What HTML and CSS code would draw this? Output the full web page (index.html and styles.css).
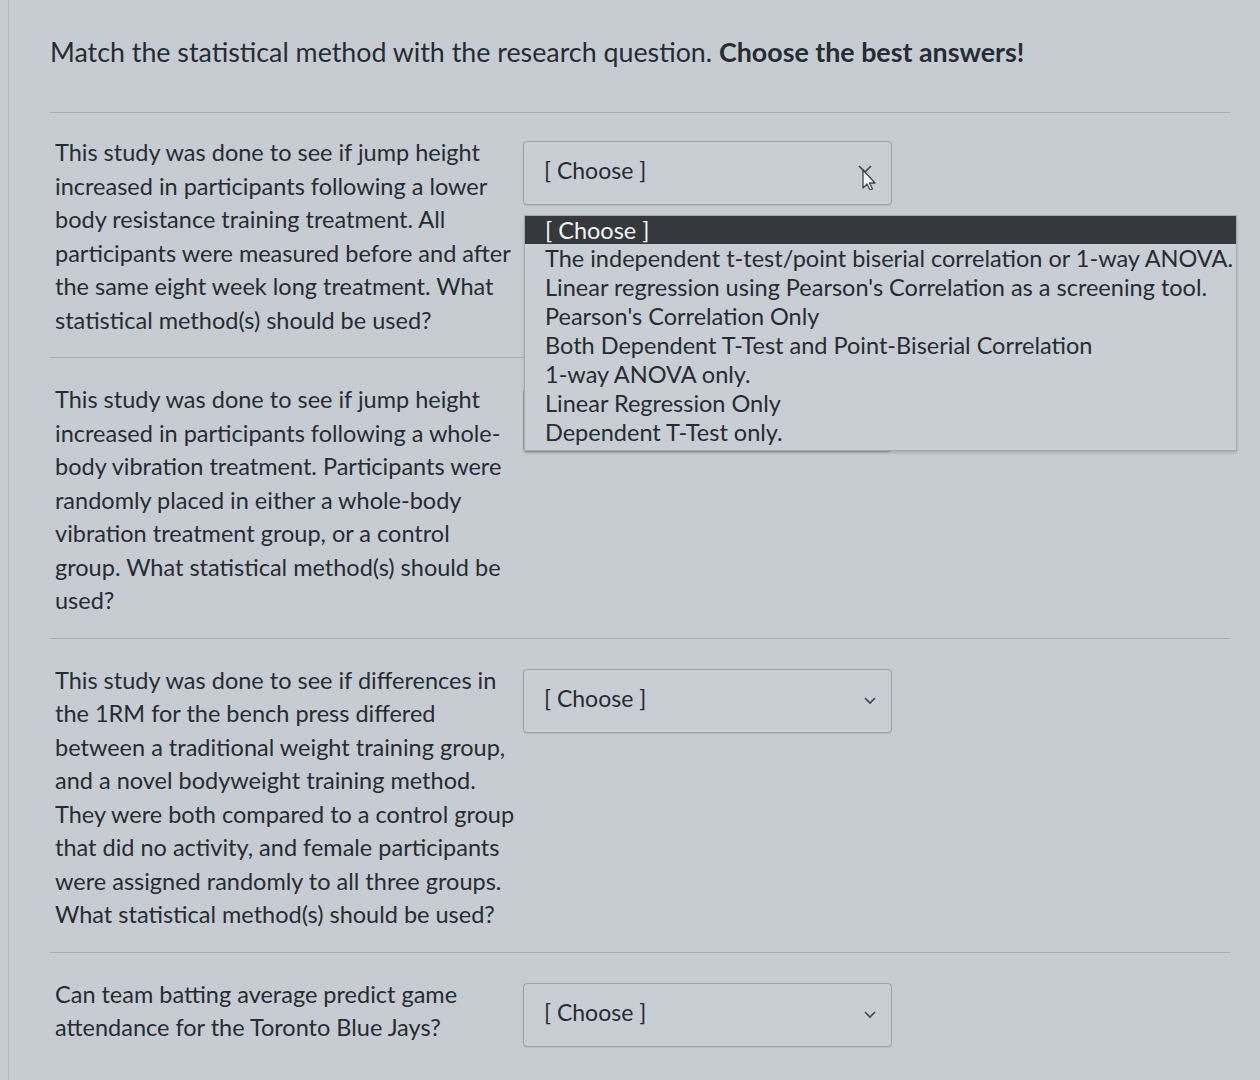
FILE: index.html
```html
<!DOCTYPE html>
<html lang="en">
<head>
    <meta charset="UTF-8">
    <title>Matching Question</title>
    <link rel="stylesheet" href="styles.css">
</head>
<body>
    <div class="page">
        <div class="question-text">
            Match the statistical method with the research question. <strong>Choose the best answers!</strong>
        </div>

        <div class="answers">
            <div class="answer-row">
                <div class="prompt">This study was done to see if jump height increased in participants following a lower body resistance training treatment. All participants were measured before and after the same eight week long treatment. What statistical method(s) should be used?</div>
                <div class="select-wrap">
                    <div class="select open">
                        <span>[ Choose ]</span>
                        <svg class="cursor" width="22" height="30" viewBox="0 0 22 30">
                            <path d="M2 6 L8 12 L14 6" fill="none" stroke="#3a4550" stroke-width="1.6"/>
                            <path d="M6 10 L6 28 L10 24 L13 30 L15.5 29 L12.5 23 L18 23 Z" fill="#fff" stroke="#3a4550" stroke-width="1.3" stroke-linejoin="round"/>
                        </svg>
                    </div>
                    <ul class="options">
                        <li class="selected">[ Choose ]</li>
                        <li>The independent t-test/point biserial correlation or 1-way ANOVA.</li>
                        <li>Linear regression using Pearson's Correlation as a screening tool.</li>
                        <li>Pearson's Correlation Only</li>
                        <li>Both Dependent T-Test and Point-Biserial Correlation</li>
                        <li>1-way ANOVA only.</li>
                        <li>Linear Regression Only</li>
                        <li>Dependent T-Test only.</li>
                    </ul>
                </div>
            </div>

            <div class="answer-row">
                <div class="prompt">This study was done to see if jump height increased in participants following a whole-body vibration treatment. Participants were randomly placed in either a whole-body vibration treatment group, or a control group. What statistical method(s) should be used?</div>
                <div class="select-wrap">
                    <!-- sits under the open list above -->
                    <div class="select covered">
                        <span>[ Choose ]</span>
                        <svg class="chevron" width="14" height="10" viewBox="0 0 14 10"><path d="M2 2 L7 7 L12 2" fill="none" stroke="#3a4550" stroke-width="1.6"/></svg>
                    </div>
                </div>
            </div>

            <div class="answer-row">
                <div class="prompt">This study was done to see if differences in the 1RM for the bench press differed between a traditional weight training group, and a novel bodyweight training method. They were both compared to a control group that did no activity, and female participants were assigned randomly to all three groups. What statistical method(s) should be used?</div>
                <div class="select-wrap">
                    <div class="select">
                        <span>[ Choose ]</span>
                        <svg class="chevron" width="14" height="10" viewBox="0 0 14 10"><path d="M2 2 L7 7 L12 2" fill="none" stroke="#3a4550" stroke-width="1.6"/></svg>
                    </div>
                </div>
            </div>

            <div class="answer-row last">
                <div class="prompt">Can team batting average predict game attendance for the Toronto Blue Jays?</div>
                <div class="select-wrap">
                    <div class="select">
                        <span>[ Choose ]</span>
                        <svg class="chevron" width="14" height="10" viewBox="0 0 14 10"><path d="M2 2 L7 7 L12 2" fill="none" stroke="#3a4550" stroke-width="1.6"/></svg>
                    </div>
                </div>
            </div>
        </div>
    </div>
</body>
</html>
```

FILE: styles.css
```css
html, body {
    margin: 0;
    height: 100%;
    background-color: #c7ccd2;
    font-family: Lato, "Open Sans", sans-serif;
    color: #262c33;
}
.page {
    margin-left: 8px;
    min-height: 100%;
    border-left: 1px solid #b3b8be;
    padding: 34px 30px 0 41px;
    box-sizing: border-box;
}
.question-text {
    font-size: 26.8px;
    line-height: 36px;
    padding-bottom: 42px;
    border-bottom: 1px solid #a9aeb4;
}
.question-text strong {
    font-weight: 700;
}
.answer-row {
    display: grid;
    grid-template-columns: 462px 369px;
    column-gap: 6px;
    padding: 20px 0 20px 5px;
    border-bottom: 1px solid #a9aeb4;
}
.answer-row + .answer-row {
    padding-top: 22px;
}
.answer-row.last {
    border-bottom: none;
}
.prompt {
    font-size: 23.5px;
    line-height: 33.5px;
    padding-top: 3px;
}
.select-wrap {
    position: relative;
    padding-top: 8px;
}
.select {
    height: 62px;
    border: 1px solid #9ba1a8;
    border-radius: 4px;
    background-color: #c9ced4;
    display: flex;
    align-items: center;
    justify-content: space-between;
    padding: 0 14px 0 20px;
    font-size: 23px;
    box-shadow: 0 1px 1px rgba(0, 0, 0, 0.08);
}
.select span {
    margin-top: -6px;
}
.select.covered span {
    visibility: hidden;
}
.cursor {
    margin-top: 4px;
    margin-right: -2px;
}
.options {
    position: absolute;
    top: 82px;
    left: 1px;
    width: 711px;
    margin: 0;
    padding: 0 0 3px 0;
    list-style: none;
    background-color: #c9ced4;
    border: 1px solid #a3a9b0;
    box-shadow: 0 2px 3px rgba(0, 0, 0, 0.15);
    z-index: 2;
}
.options li {
    font-size: 23.5px;
    line-height: 29px;
    padding-left: 20px;
    white-space: nowrap;
}
.options li.selected {
    background-color: #35383c;
    color: #f2f3f4;
    line-height: 28px;
}
```
